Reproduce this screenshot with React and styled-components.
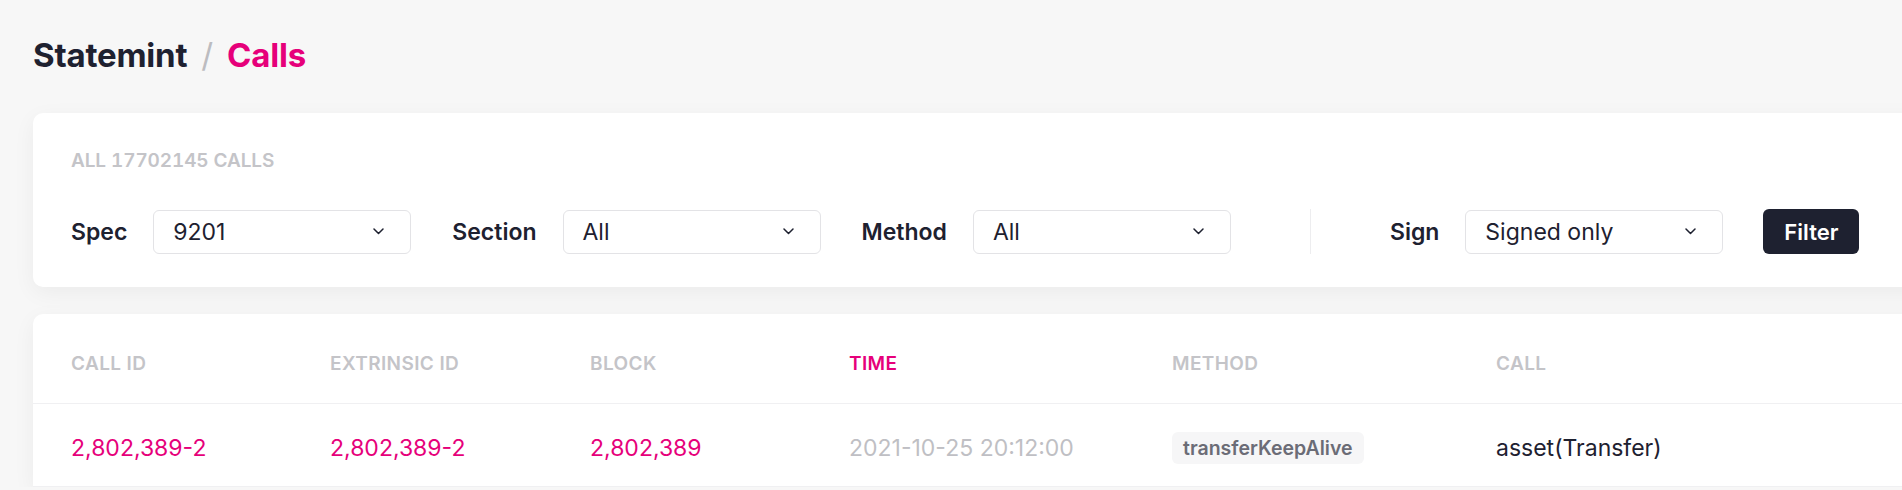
import React from "react";
import styled, { createGlobalStyle } from "styled-components";

const GlobalStyle = createGlobalStyle`
  body {
    margin: 0;
    background: #f7f7f7;
    font-family: Inter, "Noto Sans", sans-serif;
    color: #1e2130;
    overflow: hidden;
  }
`;

const PINK = "#e6007a";

function Chevron() {
  return (
    <svg width="11" height="7" viewBox="0 0 11 7" fill="none">
      <path d="M1 1L5.5 5.5L10 1" stroke="#1e2130" strokeWidth="1.5" strokeLinecap="round" strokeLinejoin="round" />
    </svg>
  );
}

function Select({ value }) {
  return (
    <StyledSelect>
      <span>{value}</span>
      <Chevron />
    </StyledSelect>
  );
}

const filters = [
  { label: "Spec", value: "9201" },
  { label: "Section", value: "All" },
  { label: "Method", value: "All" },
];

const columns = [
  { title: "Call ID", width: 259 },
  { title: "Extrinsic ID", width: 260 },
  { title: "Block", width: 259 },
  { title: "Time", width: 323, active: true },
  { title: "Method", width: 324 },
  { title: "Call", width: 300 },
];

export default function App() {
  return (
    <StyledPage>
      <GlobalStyle />
      <StyledTitle>
        Statemint<StyledSlash>/</StyledSlash><StyledCurrent>Calls</StyledCurrent>
      </StyledTitle>

      <StyledCard>
        <StyledCaption>All 17702145 calls</StyledCaption>
        <StyledFilterRow>
          {filters.map((f) => (
            <StyledField key={f.label}>
              <StyledLabel>{f.label}</StyledLabel>
              <Select value={f.value} />
            </StyledField>
          ))}
          <StyledDivider />
          <StyledField>
            <StyledLabel>Sign</StyledLabel>
            <Select value="Signed only" />
          </StyledField>
          <StyledButton>Filter</StyledButton>
        </StyledFilterRow>
      </StyledCard>

      <StyledTableCard>
        <StyledHeadRow>
          {columns.map((c) => (
            <StyledHeadCell key={c.title} $active={c.active} style={{ width: c.width }}>
              {c.title}
            </StyledHeadCell>
          ))}
        </StyledHeadRow>
        <StyledRow>
          <StyledCell $color={PINK} style={{ width: 259 }}>2,802,389-2</StyledCell>
          <StyledCell $color={PINK} style={{ width: 260 }}>2,802,389-2</StyledCell>
          <StyledCell $color={PINK} style={{ width: 259 }}>2,802,389</StyledCell>
          <StyledCell $color="#bfbfc4" style={{ width: 323 }}>2021-10-25 20:12:00</StyledCell>
          <StyledCell style={{ width: 324 }}>
            <StyledTag>transferKeepAlive</StyledTag>
          </StyledCell>
          <StyledCell>asset(Transfer)</StyledCell>
        </StyledRow>
      </StyledTableCard>
    </StyledPage>
  );
}

const StyledPage = styled.div`
  width: 1960px;
  padding: 30px 0 0 33px;
  box-sizing: border-box;
`;

const StyledTitle = styled.h1`
  margin: 0 0 33px;
  font-size: 33px;
  line-height: 50px;
  font-weight: 700;
  letter-spacing: -0.2px;
  color: #1e2130;
`;

const StyledSlash = styled.span`
  color: #bcbcc0;
  font-weight: 400;
  margin: 0 14px;
`;

const StyledCurrent = styled.span`
  color: ${PINK};
`;

const StyledCard = styled.div`
  background: #fff;
  border-radius: 10px;
  box-shadow: 0 6px 22px rgba(0, 0, 0, 0.05);
  padding: 36px 38px 33px;
`;

const StyledCaption = styled.div`
  font-size: 19px;
  line-height: 24px;
  font-weight: 600;
  letter-spacing: -0.1px;
  font-variant-numeric: tabular-nums;
  text-transform: uppercase;
  color: #c4c4c8;
  margin-bottom: 36px;
`;

const StyledFilterRow = styled.div`
  display: flex;
  align-items: center;
`;

const StyledField = styled.div`
  display: flex;
  align-items: center;
  gap: 26px;
  margin-right: 41px;
`;

const StyledLabel = styled.span`
  font-size: 23px;
  font-weight: 600;
  color: #1e2130;
`;

const StyledSelect = styled.div`
  box-sizing: border-box;
  width: 258px;
  height: 44px;
  display: flex;
  align-items: center;
  justify-content: space-between;
  padding: 0 26px 0 19px;
  border: 1px solid #e3e3e6;
  border-radius: 6px;
  font-size: 23px;
  color: #1e2130;
`;

const StyledDivider = styled.div`
  width: 1px;
  height: 45px;
  background: #ededef;
  margin: 0 79px 0 38px;
`;

const StyledButton = styled.button`
  height: 45px;
  padding: 0 21px;
  border: none;
  border-radius: 6px;
  background: #1e2130;
  color: #fff;
  font-family: inherit;
  font-size: 22px;
  font-weight: 600;
  margin-left: -1px;
`;

const StyledTableCard = styled.div`
  margin-top: 27px;
  background: #fff;
  border-radius: 10px 10px 0 0;
  box-shadow: 0 6px 22px rgba(0, 0, 0, 0.05);
`;

const StyledHeadRow = styled.div`
  display: flex;
  padding: 38px 38px 27px;
  border-bottom: 1px solid #f0f0f2;
`;

const StyledHeadCell = styled.div`
  flex: none;
  font-size: 19px;
  line-height: 24px;
  font-weight: 600;
  letter-spacing: 0.4px;
  text-transform: uppercase;
  color: ${(p) => (p.$active ? PINK : "#c4c4c8")};
`;

const StyledRow = styled.div`
  box-sizing: border-box;
  display: flex;
  align-items: center;
  padding: 6px 38px 0;
  height: 83px;
  border-bottom: 1px solid #f0f0f2;
`;

const StyledCell = styled.div`
  flex: none;
  font-size: 23px;
  color: ${(p) => p.$color || "#1e2130"};
`;

const StyledTag = styled.span`
  display: inline-block;
  padding: 4px 11px;
  border-radius: 6px;
  background: #f6f6f7;
  color: #6b6c76;
  font-size: 19.5px;
  font-weight: 600;
  line-height: 24px;
`;
